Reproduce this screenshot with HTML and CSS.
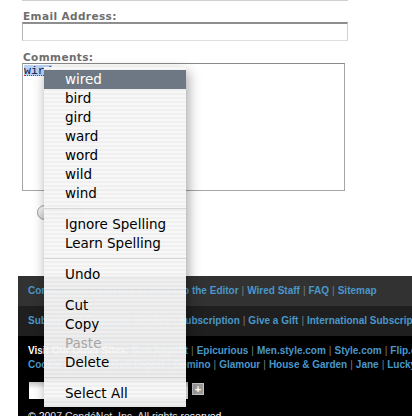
FILE: index.html
```html
<!DOCTYPE html>
<html>
<head>
<meta charset="utf-8">
<link rel="stylesheet" href="styles.css">
</head>
<body>
<div class="page">
  <div class="form">
    <div class="prev-field"></div>
    <div class="label">Email Address:</div>
    <div class="input"></div>
    <div class="label label-comments">Comments:</div>
    <div class="textarea"><span class="misspelled">wird</span></div>
    <div class="button">Post</div>
  </div>

  <div class="footer">
    <div class="bar bar1">
      <a>Contact Us</a><span class="sep">|</span><a>Advertise</a><span class="sep">|</span><a>Letters to the Editor</a><span class="sep">|</span><a>Wired Staff</a><span class="sep">|</span><a>FAQ</a><span class="sep">|</span><a>Sitemap</a>
    </div>
    <div class="bar bar2">
      <a>Subscribe</a><span class="sep">|</span><a>Customer Service</a><span class="sep">|</span><a>Subscription</a><span class="sep">|</span><a>Give a Gift</a><span class="sep">|</span><a>International Subscriptions</a>
    </div>
    <div class="sites">
      <div class="line"><span class="visit">Visit Our Other Sites:</span> <a>Bon Appétit</a><span class="sep">|</span><a>Epicurious</a><span class="sep">|</span><a>Men.style.com</a><span class="sep">|</span><a>Style.com</a><span class="sep">|</span><a>Flip.com</a></div>
      <div class="line"><a>Cookie</a><span class="sep">|</span><a>Details</a><span class="sep">|</span><a>Golf Digest</a><span class="sep">|</span><a>Domino</a><span class="sep">|</span><a>Glamour</a><span class="sep">|</span><a>House &amp; Garden</a><span class="sep">|</span><a>Jane</a><span class="sep">|</span><a>Lucky</a><span class="sep">|</span><a>Modern Bride</a></div>
      <div class="search">
        <div class="search-input"></div>
        <div class="plus">+</div>
      </div>
      <div class="copy">© 2007 CondéNet, Inc. All rights reserved.</div>
    </div>
  </div>

  <div class="menu">
    <div class="item selected">wired</div>
    <div class="item">bird</div>
    <div class="item">gird</div>
    <div class="item">ward</div>
    <div class="item">word</div>
    <div class="item">wild</div>
    <div class="item">wind</div>
    <div class="divider"></div>
    <div class="item">Ignore Spelling</div>
    <div class="item">Learn Spelling</div>
    <div class="divider"></div>
    <div class="item">Undo</div>
    <div class="divider"></div>
    <div class="item">Cut</div>
    <div class="item">Copy</div>
    <div class="item disabled">Paste</div>
    <div class="item">Delete</div>
    <div class="divider"></div>
    <div class="item">Select All</div>
  </div>
</div>
</body>
</html>
```
FILE: styles.css
```css
html, body {
  margin: 0;
  padding: 0;
  background: #ffffff;
}

.page {
  position: relative;
  width: 412px;
  height: 416px;
  overflow: hidden;
  background: #ffffff;
}

.form {
  margin-left: 22px;
  width: 326px;
  display: flex;
  flex-direction: column;
}

.prev-field {
  height: 1px;
  background: #cfcfcf;
}

.label {
  margin-top: 10px;
  height: 11px;
  line-height: 11px;
  padding-left: 1px;
  font-family: "DejaVu Sans", Verdana, sans-serif;
  font-weight: bold;
  font-size: 10.5px;
  letter-spacing: 0.4px;
  color: #6e6e6e;
  white-space: nowrap;
}

.input {
  box-sizing: border-box;
  height: 19px;
  width: 326px;
  border-top: 2px solid #8e8e8e;
  border-left: 1px solid #b5b5b5;
  border-right: 1px solid #d0d0d0;
  border-bottom: 1px solid #dedede;
}

.label-comments {
  margin-top: 11px;
}

.textarea {
  box-sizing: border-box;
  width: 323px;
  height: 128px;
  border: 1px solid #a5a5a5;
  border-top-color: #8a8a8a;
  padding: 1px 0 0 1px;
  font-family: "Liberation Mono", "DejaVu Sans Mono", monospace;
  font-size: 11.5px;
  line-height: 11px;
  color: #14144a;
}

.misspelled {
  display: inline-block;
  background: #b8d2f4;
  border-bottom: 1px dotted #e02020;
  height: 10px;
}

.button {
  box-sizing: border-box;
  margin-top: 14px;
  margin-left: 15px;
  width: 46px;
  height: 15px;
  border: 1px solid #9a9a9a;
  border-radius: 8px;
  background: linear-gradient(#ffffff, #d6d6d6);
  font-family: "DejaVu Sans", sans-serif;
  font-size: 10px;
  line-height: 13px;
  color: #9a9a9a;
  padding-left: 10px;
}

.footer {
  margin-top: 56px;
  margin-left: 18px;
  width: 600px;
  font-family: "Liberation Sans", Arial, sans-serif;
  font-weight: bold;
  font-size: 10px;
  white-space: nowrap;
}

.footer a {
  color: #4a97c9;
}

.sep {
  color: #7d7d7d;
  font-weight: normal;
  margin: 0 3px;
}

.bar {
  height: 30px;
  line-height: 30px;
  padding-left: 10px;
}

.bar1 {
  background: #323232;
}

.bar2 {
  background: #1f1f1f;
}

.sites {
  background: #000000;
  padding: 8px 10px 0 10px;
  height: 80px;
}

.line {
  line-height: 14px;
  height: 14px;
}

.visit {
  color: #ffffff;
}

.search {
  margin-top: 10px;
  margin-left: 1px;
  display: flex;
  align-items: flex-start;
  gap: 4px;
}

.search-input {
  width: 159px;
  height: 17px;
  background: linear-gradient(#c8c8c8, #ffffff 40%);
}

.plus {
  box-sizing: border-box;
  margin-top: 1px;
  width: 12px;
  height: 12px;
  background: #9a9a9a;
  border: 1px solid #c4c4c4;
  color: #ffffff;
  font-size: 11px;
  line-height: 10px;
  text-align: center;
}

.copy {
  margin-top: 10px;
  line-height: 14px;
  color: #ffffff;
  font-weight: normal;
  font-size: 10.5px;
}

.menu {
  position: absolute;
  left: 44px;
  top: 67px;
  width: 142px;
  box-sizing: border-box;
  padding: 3px 0 4px 0;
  background: repeating-linear-gradient(to bottom,
    rgba(247, 247, 247, 0.96) 0px, rgba(247, 247, 247, 0.96) 2px,
    rgba(239, 239, 239, 0.96) 2px, rgba(239, 239, 239, 0.96) 4px);
  box-shadow: 2px 5px 12px rgba(0, 0, 0, 0.38);
  font-family: "DejaVu Sans", "Lucida Grande", sans-serif;
  font-size: 13.5px;
  color: #000000;
}

.item {
  height: 19px;
  line-height: 19px;
  padding-left: 21px;
  white-space: nowrap;
}

.item.selected {
  background: #6d7884;
  color: #ffffff;
}

.item.disabled {
  color: #a6a6a6;
}

.divider {
  height: 1px;
  margin: 5px 0 6px 0;
  background: #d6d6d6;
}
```
